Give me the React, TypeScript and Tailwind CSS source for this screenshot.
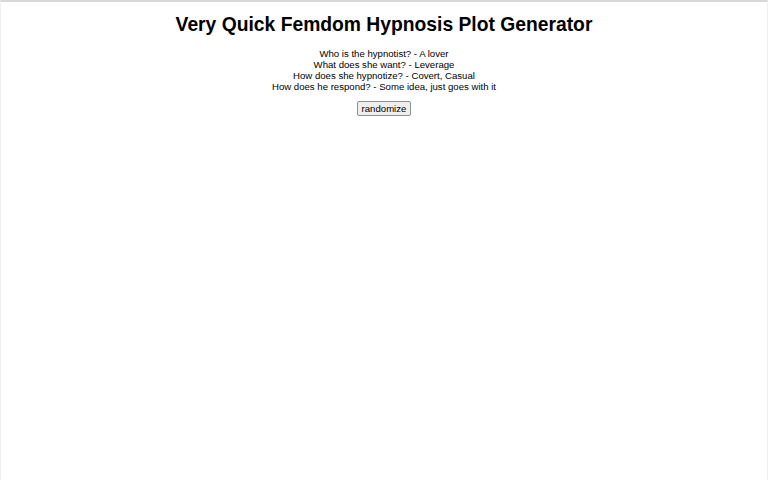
export default function App() {
  return (
    <div className="min-h-[480px] bg-white border-t-2 border-x border-t-[#d9d9d9] border-x-[#f0f0f0] font-['Liberation_Sans',Arial,sans-serif] text-black">
      <div className="flex flex-col items-center pt-[11px]">
        <h1 className="text-[19.3px] font-bold leading-[23px]">
          Very Quick Femdom Hypnosis Plot Generator
        </h1>

        <div className="mt-[12px] text-center text-[9.6px] leading-[11px]">
          <p>Who is the hypnotist? - A lover</p>
          <p>What does she want? - Leverage</p>
          <p>How does she hypnotize? - Covert, Casual</p>
          <p>How does he respond? - Some idea, just goes with it</p>
        </div>

        <button className="mt-[9px] h-[15px] w-[54px] text-[9.6px] leading-[12px] bg-[#efefef] border border-[#8f8f8f] rounded-[2px]">
          randomize
        </button>
      </div>
    </div>
  );
}
